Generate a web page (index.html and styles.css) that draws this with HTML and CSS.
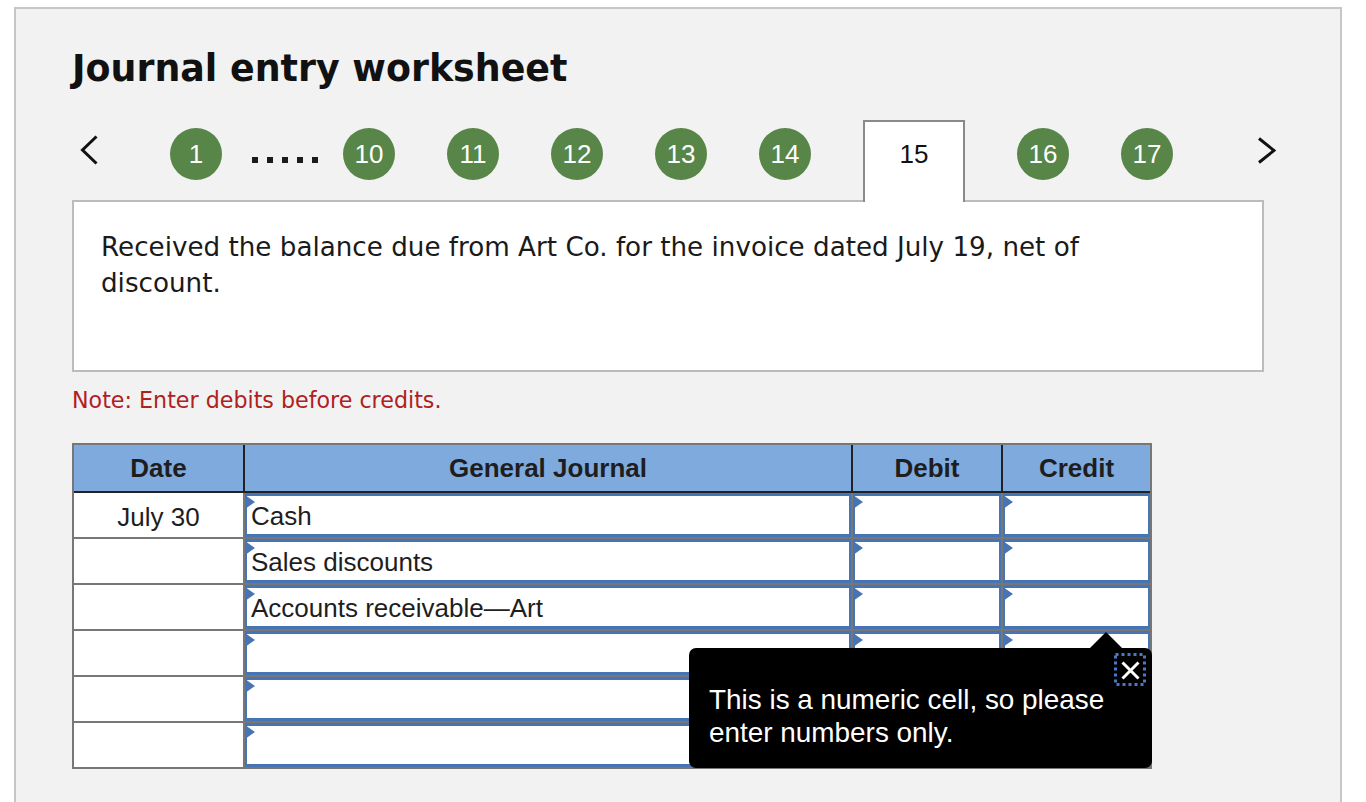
FILE: index.html
```html
<!DOCTYPE html>
<html lang="en">
<head>
<meta charset="utf-8">
<title>Journal entry worksheet</title>
<link rel="stylesheet" href="styles.css">
</head>
<body>
<div class="panel">
  <h1 class="title">Journal entry worksheet</h1>
  <div class="nav">
    <span class="chev chev-left"><svg width="18" height="30" viewBox="0 0 18 30"><polyline points="16.5,1.5 2.5,15 16.5,28.5" fill="none" stroke="#111" stroke-width="3"/></svg></span>
    <span class="step step-first">1</span>
    <span class="dots"><i></i><i></i><i></i><i></i><i></i></span>
    <div class="steps">
      <span class="step">10</span>
      <span class="step">11</span>
      <span class="step">12</span>
      <span class="step">13</span>
      <span class="step">14</span>
      <span class="tab">15</span>
      <span class="step">16</span>
      <span class="step">17</span>
    </div>
    <span class="chev chev-right"><svg width="19" height="27" viewBox="0 0 19 27"><polyline points="2,1.5 17,13.5 2,25.5" fill="none" stroke="#111" stroke-width="3"/></svg></span>
  </div>
  <div class="desc">
    <p>Received the balance due from Art Co. for the invoice dated July 19, net of discount.</p>
  </div>
  <p class="note">Note: Enter debits before credits.</p>
  <div class="journal-wrap">
    <div class="journal">
      <div class="head">
        <div class="hcell">Date</div>
        <div class="hcell">General Journal</div>
        <div class="hcell">Debit</div>
        <div class="hcell">Credit</div>
      </div>
      <div class="body">
        <div class="date">July 30</div><div class="inp">Cash</div><div class="inp"></div><div class="inp"></div>
        <div class="date"></div><div class="inp">Sales discounts</div><div class="inp"></div><div class="inp"></div>
        <div class="date"></div><div class="inp">Accounts receivable—Art</div><div class="inp"></div><div class="inp"></div>
        <div class="date"></div><div class="inp"></div><div class="inp"></div><div class="inp"></div>
        <div class="date"></div><div class="inp"></div><div class="inp"></div><div class="inp"></div>
        <div class="date"></div><div class="inp"></div><div class="inp"></div><div class="inp"></div>
      </div>
    </div>
    <div class="tooltip">
      <button class="close" type="button" aria-label="Close"><svg width="32" height="33" viewBox="0 0 32 33"><rect x="1.5" y="1.5" width="29" height="30" fill="none" stroke="#4a78c8" stroke-width="3" stroke-dasharray="3 3"/><path d="M8.5 9.5 L24.5 25.5 M24.5 9.5 L8.5 25.5" stroke="#fff" stroke-width="3" fill="none"/></svg></button>
      This is a numeric cell, so please enter numbers only.
    </div>
  </div>
</div>
</body>
</html>
```
FILE: styles.css
```css
body {
  margin: 0;
  background: #fff;
}

.panel {
  margin: 7px 0 0 14px;
  width: 1328px;
  min-height: 795px;
  box-sizing: border-box;
  border: 2px solid #c6c6c6;
  border-bottom: 0;
  background: #f2f2f2;
  padding: 0 0 0 56px;
  overflow: hidden;
}

.title {
  margin: 39px 0 0 0;
  font: 700 36.4px/42px "DejaVu Sans", sans-serif;
  color: #111;
}

.nav {
  margin-top: 30px;
  display: flex;
  align-items: flex-start;
}

.chev svg {
  display: block;
}

.chev-left {
  margin-left: 8px;
  margin-top: 15px;
}

.chev-right {
  margin-left: 84px;
  margin-top: 17px;
}

.step {
  display: block;
  width: 52px;
  height: 52px;
  margin-top: 8px;
  border-radius: 50%;
  background: #588548;
  color: #fff;
  font: 26px/52px "Liberation Sans", Arial, sans-serif;
  text-align: center;
}

.step-first {
  margin-left: 72px;
}

.dots {
  display: flex;
  gap: 9px;
  margin-left: 30px;
  margin-top: 37px;
}

.dots i {
  display: block;
  width: 6px;
  height: 6px;
  background: #1a1a1a;
}

.steps {
  display: flex;
  align-items: flex-start;
  gap: 52px;
  margin-left: 25px;
}

.tab {
  position: relative;
  z-index: 2;
  display: block;
  box-sizing: border-box;
  width: 102px;
  height: 82px;
  margin-bottom: -2px;
  padding-top: 6px;
  border: 2px solid #8a8a8a;
  border-bottom: 0;
  background: #fff;
  color: #111;
  font: 26px/52px "Liberation Sans", Arial, sans-serif;
  text-align: center;
}

.desc {
  box-sizing: border-box;
  width: 1192px;
  height: 172px;
  border: 2px solid #bcbcbc;
  background: #fff;
  padding: 27px 27px;
}

.desc p {
  margin: 0;
  max-width: 1020px;
  font: 26.2px/36px "DejaVu Sans", sans-serif;
  color: #1a1a1a;
}

.note {
  margin: 15px 0 0 0;
  font: 22.2px/26px "DejaVu Sans", sans-serif;
  color: #b0201e;
}

.journal-wrap {
  position: relative;
  margin-top: 30px;
  width: 1080px;
}

.journal {
  border: 2px solid #777;
  font-family: "Liberation Sans", Arial, sans-serif;
  color: #1e1e1e;
}

.head {
  display: grid;
  grid-template-columns: 169px 606px 148px 147px;
  column-gap: 2px;
  background: #222;
  border-bottom: 2px solid #222;
}

.hcell {
  height: 46px;
  background: #7faade;
  font-weight: 700;
  font-size: 26px;
  line-height: 46px;
  text-align: center;
}

.body {
  display: grid;
  grid-template-columns: 169px 606px 148px 147px;
  grid-auto-rows: 44px;
  gap: 2px;
  background: #777;
}

.date {
  background: #fff;
  font-size: 26px;
  line-height: 44px;
  padding-top: 2px;
  box-sizing: border-box;
  text-align: center;
  overflow: hidden;
}

.inp {
  position: relative;
  box-sizing: border-box;
  background: #fff;
  border: 3px solid #4674b5;
  border-left-width: 2px;
  border-right-width: 2px;
  padding: 2px 0 0 4px;
  font-size: 26px;
  line-height: 36px;
  white-space: nowrap;
}

.inp::before {
  content: "";
  position: absolute;
  left: -2px;
  top: -1px;
  border-left: 10px solid #4674b5;
  border-top: 7px solid transparent;
  border-bottom: 7px solid transparent;
}

.tooltip {
  position: absolute;
  left: 617px;
  top: 205px;
  width: 463px;
  height: 120px;
  box-sizing: border-box;
  padding: 35px 20px 0 20px;
  background: #000;
  border-radius: 7px;
  color: #fff;
  font: 27.9px/33px "Liberation Sans", Arial, sans-serif;
}

.tooltip::before {
  content: "";
  position: absolute;
  left: 401px;
  top: -16px;
  border-left: 16px solid transparent;
  border-right: 16px solid transparent;
  border-bottom: 16px solid #000;
}

.close {
  position: absolute;
  left: 425px;
  top: 5px;
  width: 32px;
  height: 33px;
  padding: 0;
  border: 0;
  background: transparent;
}

.close svg {
  display: block;
}
```
